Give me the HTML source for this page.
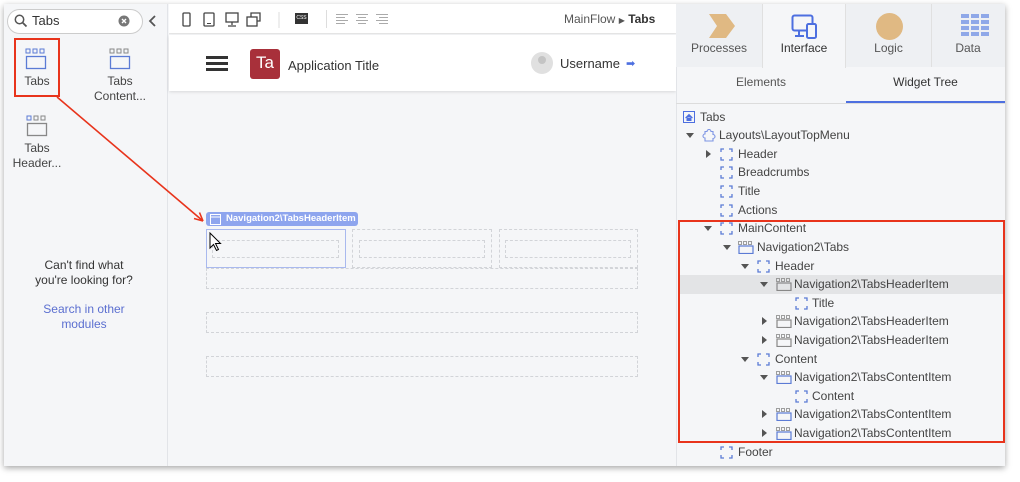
<!DOCTYPE html>
<html><head><style>
*{margin:0;padding:0;box-sizing:border-box}
body{width:1020px;height:482px;background:#fff;font-family:"Liberation Sans",sans-serif;font-size:12px;color:#444;position:relative;overflow:hidden}
.abs{position:absolute}
#app{left:4px;top:4px;width:1001px;height:462px;background:#f5f6f8;box-shadow:0 2px 6px rgba(0,0,0,.35);overflow:hidden}
.row{position:absolute;height:18px;line-height:18px;white-space:nowrap;font-size:12px;color:#444}
.tri{position:absolute;width:0;height:0}
.tdn{border-left:4px solid transparent;border-right:4px solid transparent;border-top:5px solid #555}
.trt{border-top:4px solid transparent;border-bottom:4px solid transparent;border-left:5px solid #555}
</style></head><body>
<div id="app" class="abs">
 <div class="abs" style="left:0;top:0;width:164px;height:462px;background:#f5f6f8;border-right:1px solid #e2e4e8"></div>
 <div class="abs" style="left:3px;top:5px;width:136px;height:25px;border:1px solid #ccc;border-radius:13px;background:#fff"></div>
 <svg class="abs" style="left:10px;top:10px" width="14" height="14"><circle cx="5.5" cy="5.5" r="4.2" fill="none" stroke="#555" stroke-width="1.5"/><line x1="8.5" y1="8.5" x2="12.5" y2="12.5" stroke="#555" stroke-width="1.8"/></svg>
 <div class="abs" style="left:28px;top:9px;font-size:13px;color:#333">Tabs</div>
 <svg class="abs" style="left:114px;top:11px" width="12" height="12"><circle cx="6" cy="6" r="5.5" fill="#777"/><path d="M4 4l4 4M8 4l-4 4" stroke="#fff" stroke-width="1.4"/></svg>
 <svg class="abs" style="left:144px;top:11px" width="10" height="12"><path d="M7 1L2 6l5 5" fill="none" stroke="#555" stroke-width="1.8"/></svg>
 <div class="abs" style="left:10px;top:34px;width:46px;height:59px;border:2px solid #e8341c"></div>
 <svg class="abs" style="left:21px;top:44px" width="22" height="22"><rect x="1" y="1" width="4" height="4" fill="none" stroke="#5b7bd5"/><rect x="8" y="1" width="4" height="4" fill="none" stroke="#5b7bd5"/><rect x="15" y="1" width="4" height="4" fill="none" stroke="#5b7bd5"/><rect x="1.5" y="8.5" width="19" height="12" fill="none" stroke="#5b7bd5" stroke-width="1.3"/></svg>
 <div class="abs" style="left:10px;top:70px;width:46px;text-align:center">Tabs</div>
 <svg class="abs" style="left:105px;top:44px" width="22" height="22"><rect x="1" y="1" width="4" height="4" fill="none" stroke="#888"/><rect x="8" y="1" width="4" height="4" fill="none" stroke="#888"/><rect x="15" y="1" width="4" height="4" fill="none" stroke="#888"/><rect x="1.5" y="8.5" width="19" height="12" fill="none" stroke="#5b7bd5" stroke-width="1.3"/></svg>
 <div class="abs" style="left:80px;top:70px;width:72px;text-align:center;line-height:15px">Tabs<br>Content...</div>
 <svg class="abs" style="left:22px;top:111px" width="22" height="22"><rect x="1" y="1" width="4" height="4" fill="none" stroke="#5b7bd5"/><rect x="8" y="1" width="4" height="4" fill="none" stroke="#888"/><rect x="15" y="1" width="4" height="4" fill="none" stroke="#888"/><rect x="1.5" y="8.5" width="19" height="12" fill="none" stroke="#888" stroke-width="1.3"/></svg>
 <div class="abs" style="left:0;top:137px;width:66px;text-align:center;line-height:15px">Tabs<br>Header...</div>
 <div class="abs" style="left:0;top:254px;width:160px;text-align:center;line-height:15px;color:#333">Can't find what<br>you're looking for?</div>
 <div class="abs" style="left:0;top:298px;width:160px;text-align:center;line-height:15px;color:#5b6fd0">Search in other<br>modules</div>

 <div class="abs" style="left:165px;top:0;width:507px;height:30px;background:#fff;border-bottom:1px solid #e6e6e6"></div>
 <svg class="abs" style="left:176px;top:8px" width="110" height="16"><rect x="3" y="1" width="7" height="13" rx="1" fill="none" stroke="#444" stroke-width="1.3"/><rect x="24" y="1" width="10" height="13" rx="1" fill="none" stroke="#444" stroke-width="1.3"/><rect x="27" y="11" width="4" height="1" fill="#444"/><rect x="46" y="1" width="12" height="9" fill="none" stroke="#444" stroke-width="1.3"/><path d="M52 10v3M48 14h8" stroke="#444" stroke-width="1.3"/><rect x="67" y="5" width="10" height="9" fill="none" stroke="#444" stroke-width="1.3"/><path d="M71 5V1h9v8h-3" fill="none" stroke="#444" stroke-width="1.3"/><line x1="99" y1="0" x2="99" y2="16" stroke="#ddd"/></svg>
 <div class="abs" style="left:291px;top:9px;width:13px;height:11px;background:#333;color:#fff;font-size:5px;line-height:11px;text-align:center">CSS</div>
 <div class="abs" style="left:322px;top:6px;width:1px;height:18px;background:#ddd"></div>
 <svg class="abs" style="left:330px;top:9px" width="70" height="12"><g stroke="#aaa" stroke-width="1"><path d="M2 1.5h12M2 4.5h9M2 7.5h12M2 10.5h9"/><path d="M22 1.5h12M24 4.5h8M22 7.5h12M24 10.5h8"/><path d="M42 1.5h12M45 4.5h9M42 7.5h12M45 10.5h9"/></g></svg>
 <div class="abs" style="left:560px;top:8px;color:#555">MainFlow <span style="font-size:8px">▶</span> <b style="color:#333">Tabs</b></div>

 <div class="abs" style="left:165px;top:31px;width:507px;height:56px;background:#fff;box-shadow:0 1px 3px rgba(0,0,0,.12)"></div>
 <div class="abs" style="left:202px;top:52px;width:22px;height:3px;background:#333;box-shadow:0 6px 0 #333,0 12px 0 #333"></div>
 <div class="abs" style="left:246px;top:45px;width:30px;height:30px;background:#a8303a;border-radius:3px;color:#fff;font-size:17px;line-height:28px;text-align:center">Ta</div>
 <div class="abs" style="left:284px;top:54px;font-size:13px;color:#333">Application Title</div>
 <div class="abs" style="left:527px;top:48px;width:22px;height:22px;border-radius:50%;background:#e0e0e0"></div>
 <div class="abs" style="left:534px;top:52px;width:8px;height:8px;border-radius:50%;background:#c4c4c4"></div>
 <div class="abs" style="left:556px;top:52px;font-size:13px;color:#333">Username</div>
 <div class="abs" style="left:622px;top:53px;color:#4d6fe0;font-size:11px">➡</div>

 <div class="abs" style="left:202px;top:208px;width:152px;height:14px;background:#8ea5ee;border-radius:3px;color:#fff;font-size:9.5px;line-height:14px;padding-left:20px;font-weight:bold">Navigation2\TabsHeaderItem</div>
 <svg class="abs" style="left:206px;top:210px" width="12" height="11"><rect x=".5" y=".5" width="10" height="10" fill="none" stroke="#fff"/><path d="M0 3h11" stroke="#fff"/></svg>
 <div class="abs" style="left:202px;top:225px;width:140px;height:39px;border:1px solid #a9b9ee"></div>
 <div class="abs" style="left:208px;top:236px;width:127px;height:18px;border:1px dashed #d2d4d8"></div>
 <div class="abs" style="left:348px;top:225px;width:140px;height:39px;border:1px dashed #d2d4d8"></div>
 <div class="abs" style="left:355px;top:236px;width:126px;height:18px;border:1px dashed #d2d4d8"></div>
 <div class="abs" style="left:495px;top:225px;width:139px;height:39px;border:1px dashed #d2d4d8"></div>
 <div class="abs" style="left:501px;top:236px;width:126px;height:18px;border:1px dashed #d2d4d8"></div>
 <div class="abs" style="left:202px;top:264px;width:432px;height:21px;border:1px dashed #d2d4d8"></div>
 <div class="abs" style="left:202px;top:308px;width:432px;height:21px;border:1px dashed #d2d4d8"></div>
 <div class="abs" style="left:202px;top:352px;width:432px;height:21px;border:1px dashed #d2d4d8"></div>
 <svg class="abs" style="left:205px;top:228px" width="14" height="20"><path d="M1 1v15l3.5-3.5 3 6 2-1-3-6h5z" fill="#fff" stroke="#000" stroke-width="1"/></svg>

 <div class="abs" style="left:672px;top:0;width:329px;height:462px;background:#f5f6f8;border-left:1px solid #e2e4e8"></div>
 <div class="abs" style="left:672px;top:0;width:329px;height:63px;background:#eef0f3"></div>
 <div class="abs" style="left:758px;top:0;width:84px;height:64px;background:#f5f6f8;border-left:1px solid #e0e0e0;border-right:1px solid #e0e0e0"></div>
 <div class="abs" style="left:927px;top:0;width:1px;height:63px;background:#e0e0e0"></div>
 <svg class="abs" style="left:705px;top:10px" width="26" height="24"><path d="M0 0h17l9 12-9 12H0l8-12z" fill="#e0b983"/></svg>
 <svg class="abs" style="left:787px;top:10px" width="28" height="26"><rect x="1.5" y="1.5" width="20" height="15" rx="2" fill="none" stroke="#4d6fe0" stroke-width="2"/><path d="M8 17v4M4 22h9" stroke="#4d6fe0" stroke-width="2"/><rect x="16" y="10" width="9" height="14" rx="1.5" fill="#f5f6f8" stroke="#4d6fe0" stroke-width="2"/></svg>
 <div class="abs" style="left:872px;top:9px;width:27px;height:27px;border-radius:50%;background:#e0b983"></div>
 <svg class="abs" style="left:957px;top:10px" width="28" height="22"><g fill="#8fa8e8"><rect x="0" y="0" width="8" height="4"/><rect x="10" y="0" width="8" height="4"/><rect x="20" y="0" width="8" height="4"/><rect x="0" y="6" width="8" height="4"/><rect x="10" y="6" width="8" height="4"/><rect x="20" y="6" width="8" height="4"/><rect x="0" y="12" width="8" height="4"/><rect x="10" y="12" width="8" height="4"/><rect x="20" y="12" width="8" height="4"/><rect x="0" y="18" width="8" height="4"/><rect x="10" y="18" width="8" height="4"/><rect x="20" y="18" width="8" height="4"/></g></svg>
 <div class="abs" style="left:672px;top:37px;width:86px;text-align:center;color:#555">Processes</div>
 <div class="abs" style="left:758px;top:37px;width:84px;text-align:center;color:#333">Interface</div>
 <div class="abs" style="left:842px;top:37px;width:85px;text-align:center;color:#555">Logic</div>
 <div class="abs" style="left:927px;top:37px;width:74px;text-align:center;color:#555">Data</div>
 <div class="abs" style="left:672px;top:64px;width:329px;height:36px;border-bottom:1px solid #dcdcdc"></div>
 <div class="abs" style="left:672px;top:71px;width:170px;text-align:center;color:#555">Elements</div>
 <div class="abs" style="left:842px;top:71px;width:159px;text-align:center;color:#333">Widget Tree</div>
 <div class="abs" style="left:842px;top:97px;width:159px;height:2px;background:#4d6fe0"></div>

 <div class="abs" style="left:676px;top:271px;width:325px;height:19px;background:#e3e4e6"></div>
 <div class="abs" style="left:674px;top:216px;width:327px;height:223px;border:2px solid #e8341c"></div>

 <div id="tree"></div>
</div>

<svg class="abs" style="left:0;top:0" width="1020" height="482"><line x1="57" y1="97" x2="203" y2="221" stroke="#e8341c" stroke-width="1.6"/><path d="M203 221l-9-2.5M203 221l-3.5-8.5" stroke="#e8341c" stroke-width="1.6" fill="none"/></svg>

<script>
var B='<svg width="13" height="13"><path d="M1 4V1h3M9 1h3v3M12 9v3H9M4 12H1V9" fill="none" stroke="#5b7bd5" stroke-width="1.3"/></svg>';
function T(c){return '<svg width="16" height="13"><rect x=".5" y=".5" width="3" height="3" fill="none" stroke="#888" stroke-width=".8"/><rect x="5.5" y=".5" width="3" height="3" fill="none" stroke="#888" stroke-width=".8"/><rect x="10.5" y=".5" width="3" height="3" fill="none" stroke="#888" stroke-width=".8"/><rect x="1" y="5" width="14" height="7.5" fill="none" stroke="'+c+'" stroke-width="1.2"/></svg>';}
var L='<svg width="14" height="13"><path d="M5 2.5a2 2 0 0 1 4 0h2v3a2 2 0 0 1 0 4v2.5H3V9a2 2 0 0 1 0-4V2.5z" fill="none" stroke="#7d95e4" stroke-width="1.1"/></svg>';
var H='<svg width="12" height="12"><rect x=".5" y=".5" width="11" height="11" fill="none" stroke="#4d6fe0"/><path d="M2.5 7L6 3.5 9.5 7M4 6.5V9.5h4V6.5" fill="#4d6fe0" stroke="#4d6fe0"/></svg>';
/* page coords: [centerY, tri, triX, icon, iconX, textX, text] */
var rows=[
[117,null,0,H,683,700,'Tabs'],
[135,'d',686,L,702,719,'Layouts\\LayoutTopMenu'],
[154,'r',706,B,720,738,'Header'],
[172,null,0,B,720,738,'Breadcrumbs'],
[191,null,0,B,720,738,'Title'],
[210,null,0,B,720,738,'Actions'],
[228,'d',704,B,720,738,'MainContent'],
[247,'d',723,T('#5b7bd5'),738,757,'Navigation2\\Tabs'],
[266,'d',741,B,757,775,'Header'],
[284,'d',760,T('#888'),776,794,'Navigation2\\TabsHeaderItem'],
[303,null,0,B,795,812,'Title'],
[321,'r',762,T('#888'),776,794,'Navigation2\\TabsHeaderItem'],
[340,'r',762,T('#888'),776,794,'Navigation2\\TabsHeaderItem'],
[359,'d',741,B,757,775,'Content'],
[377,'d',760,T('#5b7bd5'),776,794,'Navigation2\\TabsContentItem'],
[396,null,0,B,795,812,'Content'],
[414,'r',762,T('#5b7bd5'),776,794,'Navigation2\\TabsContentItem'],
[433,'r',762,T('#5b7bd5'),776,794,'Navigation2\\TabsContentItem'],
[452,null,0,B,720,738,'Footer']];
var h='';
rows.forEach(function(r){
 var c=r[0]-4;
 if(r[1]) h+='<div class="tri '+(r[1]=='d'?'tdn':'trt')+'" style="left:'+(r[2]-4)+'px;top:'+(c-(r[1]=='d'?2:4))+'px"></div>';
 h+='<div class="abs" style="left:'+(r[4]-4)+'px;top:'+(c-6)+'px;line-height:0">'+r[3]+'</div>';
 h+='<div class="row" style="left:'+(r[5]-4)+'px;top:'+(c-9)+'px">'+r[6]+'</div>';
});
document.getElementById('tree').innerHTML=h;
</script>
</body></html>
